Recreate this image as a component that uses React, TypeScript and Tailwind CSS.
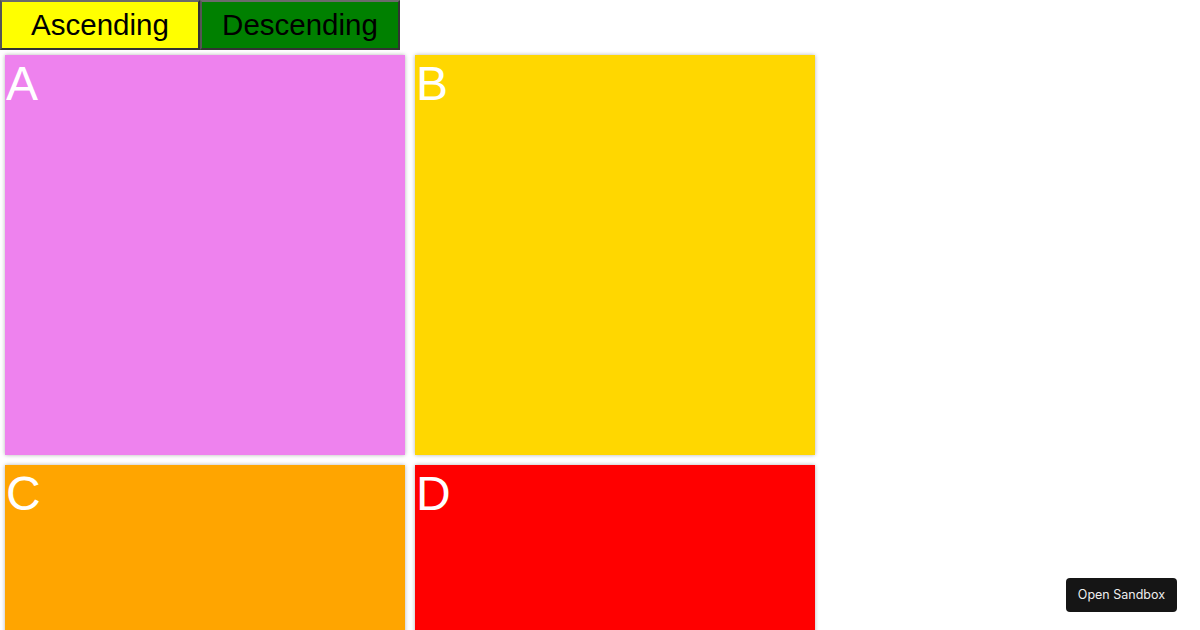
import React, { useState } from 'react';

interface Tile {
  id: string;
  color: string;
}

const TILES: Tile[] = [
  { id: 'A', color: 'bg-[#ee82ee]' },
  { id: 'B', color: 'bg-[#ffd700]' },
  { id: 'C', color: 'bg-[#ffa500]' },
  { id: 'D', color: 'bg-[#ff0000]' },
];

export default function App() {
  const [order, setOrder] = useState<'asc' | 'desc'>('asc');

  const tiles = order === 'asc' ? TILES : [...TILES].reverse();

  return (
    <div className="min-h-screen bg-white font-['Liberation_Sans',Arial,sans-serif]">
      <div className="flex">
        <button
          className="w-[200px] h-[50px] bg-[#ffff00] text-black text-[29.5px] border-2 border-[#333] border-t-[#6b6b6b] border-l-[#555]"
          onClick={() => setOrder('asc')}
        >
          Ascending
        </button>
        <button
          className="w-[200px] h-[50px] bg-[#008000] text-black text-[29.5px] border-2 border-[#333] border-t-[#6b6b6b] border-l-[#555]"
          onClick={() => setOrder('desc')}
        >
          Descending
        </button>
      </div>
      <div className="grid grid-cols-[repeat(2,410px)]">
        {tiles.map(tile => (
          <div
            key={tile.id}
            className={`m-[5px] w-[400px] h-[400px] ${tile.color} shadow-[0_0_4px_rgba(0,0,0,0.3)]`}
          >
            <span className="block pl-[1px] text-white text-[48px] leading-[57px]">{tile.id}</span>
          </div>
        ))}
      </div>
      <button className="fixed right-[23px] bottom-[18px] h-[34px] px-[12px] rounded-[4px] bg-[#151515] text-[#eee] text-[12.5px] font-['Inter',sans-serif]">
        Open Sandbox
      </button>
    </div>
  );
}
